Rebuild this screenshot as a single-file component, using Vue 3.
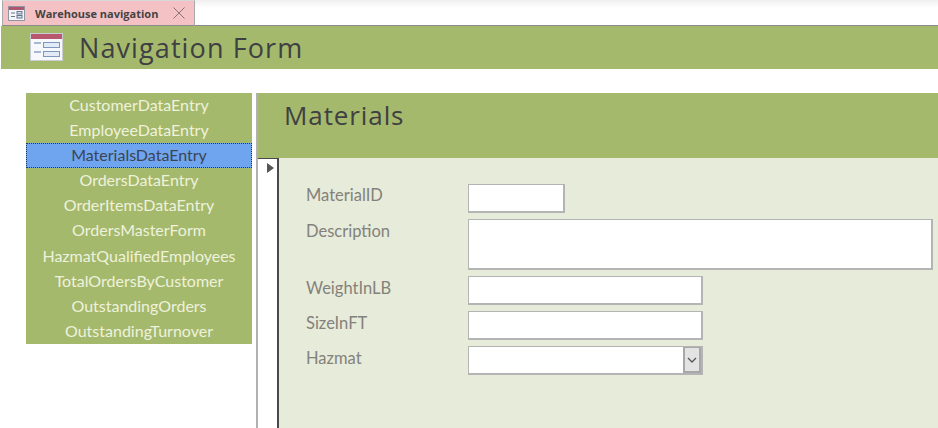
<script setup>
const items = ['CustomerDataEntry','EmployeeDataEntry','MaterialsDataEntry','OrdersDataEntry','OrderItemsDataEntry','OrdersMasterForm','HazmatQualifiedEmployees','TotalOrdersByCustomer','OutstandingOrders','OutstandingTurnover']
</script>

<template>
  <div class="page">
    <div class="tabbar">
      <div class="tab">
        <svg class="tabicon" width="17" height="15" viewBox="0 0 17 15">
          <rect x="0.5" y="0.5" width="16" height="14" fill="#f4f6fa" stroke="#8f96a3"/>
          <rect x="1" y="1" width="15" height="3" fill="#b0566c"/>
          <path d="M3 7h4M3 10.500h4" stroke="#6a7482" stroke-width="1"/>
          <rect x="9" y="5.500" width="5" height="2.500" fill="#d8e2f0" stroke="#66758c"/>
          <rect x="9" y="9.500" width="5" height="2.500" fill="#d8e2f0" stroke="#66758c"/>
        </svg>
        <span class="tabtext">Warehouse navigation</span>
        <svg class="close" width="12" height="12" viewBox="0 0 12 12">
          <path d="M0.500 0.500L11.500 11.500M11.500 0.500L0.500 11.500" stroke="#8a7478" stroke-width="1" fill="none"/>
        </svg>
      </div>
      <div class="tabrest"></div>
    </div>
    <header class="head">
      <svg width="34" height="29" viewBox="0 0 34 29">
        <rect x="1" y="1" width="32" height="27" fill="#7f8a70" opacity=".45"/>
        <rect x="0.500" y="0.500" width="32" height="27" fill="#f7f8fb" stroke="#c9ccd2"/>
        <rect x="1" y="1" width="31" height="5" fill="#b8586f"/>
        <path d="M4 10h7M4 19h7" stroke="#8ea3c2" stroke-width="1.500"/>
        <rect x="13.500" y="9.500" width="16" height="5" fill="#e3ebf6" stroke="#7f97bc"/>
        <rect x="13.500" y="18.500" width="16" height="5" fill="#e3ebf6" stroke="#7f97bc"/>
      </svg>
      <h1>Navigation Form</h1>
    </header>
    <main class="body">
      <nav class="nav">
        <div v-for="(it, i) in items" :key="it" class="item" :class="{ active: i === 2 }">{{ it }}</div>
      </nav>
      <section class="panel">
        <div class="phead"><h2>Materials</h2></div>
        <div class="pbody">
          <div class="selector"><span class="arrow"></span></div>
          <div class="form">
            <div class="row r1"><label>MaterialID</label><div class="box w-id"></div></div>
            <div class="row r2"><label>Description</label><div class="box w-desc"></div></div>
            <div class="row r3"><label>WeightInLB</label><div class="box w-mid"></div></div>
            <div class="row r3"><label>SizeInFT</label><div class="box w-mid"></div></div>
            <div class="row r3"><label>Hazmat</label>
              <div class="box w-mid combo">
                <div class="btn">
                  <svg width="10" height="6" viewBox="0 0 10 6"><path d="M1 1l4 4 4-4" fill="none" stroke="#555" stroke-width="1.300"/></svg>
                </div>
              </div>
            </div>
          </div>
        </div>
      </section>
    </main>
  </div>
</template>

<style>
html, body { margin: 0; background: #fff; overflow: hidden; }
</style>

<style scoped>
.page { width: 938px; height: 428px; overflow: hidden; background: #fff; display: flex; flex-direction: column; }
.tabbar { height: 26px; display: flex; flex: none; }
.tab { width: 193px; margin-left: 2px; height: 26px; box-sizing: border-box; background: #f4c2c4; border: 1px solid #a9a9a9; border-bottom-color: #8b8b8b; border-top-color: #d8d8d8; display: flex; align-items: center; padding-left: 5px; }
.tabicon { flex: none; }
.tabtext { font: bold 11px "Open Sans", sans-serif; color: #444; margin-left: 10px; white-space: nowrap; width: 131px; }
.close { margin-left: 7px; flex: none; }
.tabrest { flex: 1; height: 26px; box-sizing: border-box; border-bottom: 1px solid #8b8b8b; background: linear-gradient(#f0f0f0, #fff 8px); }
.head { height: 43px; margin-left: 1px; background: #a5b96c; display: flex; align-items: center; padding-left: 29px; flex: none; }
.head h1 { margin: 0 0 0 15px; font: 400 27px "Open Sans", sans-serif; letter-spacing: 1.100px; color: #3e4043; white-space: nowrap; }
.body { flex: 1; display: flex; align-items: flex-start; padding: 24px 0 0 26px; min-height: 0; }
.nav { width: 226px; flex: none; background: #a5b96c; display: flex; flex-direction: column; }
.item { height: 25.100px; line-height: 24px; box-sizing: border-box; text-align: center; font: 400 16px/24px Lato, sans-serif; color: #eef2dc; white-space: nowrap; }
.item.active { background: #6fa4ef; color: #3c4450; outline: 1px dotted #26365a; outline-offset: -1px; }
.panel { margin-left: 4px; flex: 1; height: 335px; border-left: 2px solid #b1b1b1; display: flex; flex-direction: column; min-width: 0; }
.phead { height: 65px; flex: none; background: #a5b96c; padding-left: 26px; }
.phead h2 { margin: 0; font: 400 26px/45px "Open Sans", sans-serif; letter-spacing: .9px; color: #3e4043; }
.pbody { flex: 1; display: flex; min-height: 0; }
.selector { width: 19px; flex: none; background: #fff; border-right: 2px solid #4a4a4a; border-top: 1px solid #4a4a4a; position: relative; }
.arrow { position: absolute; left: 9px; top: 4px; border-left: 7px solid #555; border-top: 5px solid transparent; border-bottom: 5px solid transparent; }
.form { flex: 1; background: #e7ebd9; padding: 26px 0 0 27px; display: flex; flex-direction: column; }
.row { display: flex; align-items: flex-start; }
.row label { width: 162px; flex: none; font: 400 16.500px/24px Lato, sans-serif; color: #84817c; }
.box { box-sizing: border-box; background: #fff; border: 1px solid #b4b4b4; border-bottom-width: 2px; border-right-width: 2px; height: 29px; }
.r1 { height: 35px; }
.r1 label { margin-top: -1px; }
.r2 { height: 57px; }
.r2 label { margin-top: 0; }
.r3 { height: 35px; }
.r3 label { margin-top: 0; }
.w-id { width: 97px; }
.w-desc { width: 465px; height: 51px; }
.w-mid { width: 235px; }
.combo { display: flex; justify-content: flex-end; }
.btn { width: 18px; height: 100%; box-sizing: border-box; background: #e3e3e3; border: 2px solid #a8a8a8; border-top-width: 1px; display: flex; align-items: center; justify-content: center; }
</style>
